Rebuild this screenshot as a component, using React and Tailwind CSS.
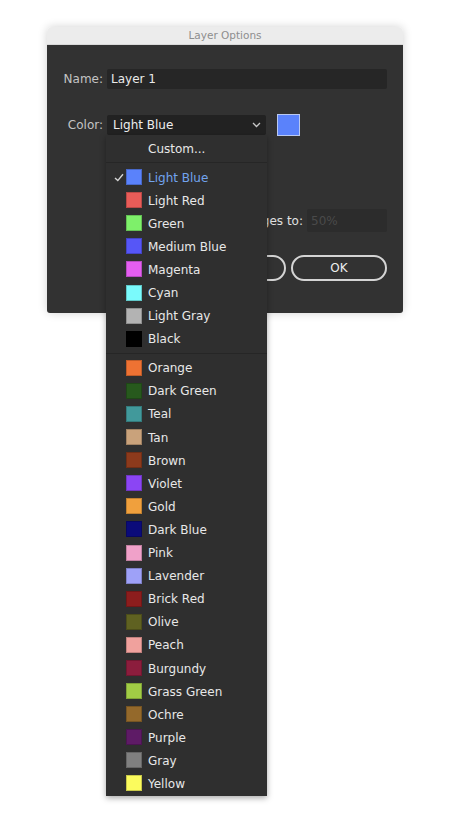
const COLORS_A = [
  { name: "Light Blue", hex: "#5a82fb", checked: true },
  { name: "Light Red", hex: "#e95c58" },
  { name: "Green", hex: "#7ef06a" },
  { name: "Medium Blue", hex: "#5656f7" },
  { name: "Magenta", hex: "#e45ef0" },
  { name: "Cyan", hex: "#7afafc" },
  { name: "Light Gray", hex: "#b3b3b3" },
  { name: "Black", hex: "#000000" },
];

const COLORS_B = [
  { name: "Orange", hex: "#ee7233" },
  { name: "Dark Green", hex: "#27591d" },
  { name: "Teal", hex: "#41999b" },
  { name: "Tan", hex: "#c9a27b" },
  { name: "Brown", hex: "#8c3a1c" },
  { name: "Violet", hex: "#8b45f4" },
  { name: "Gold", hex: "#f0a03d" },
  { name: "Dark Blue", hex: "#0b0b7a" },
  { name: "Pink", hex: "#f0a1c9" },
  { name: "Lavender", hex: "#9ea1f8" },
  { name: "Brick Red", hex: "#8c1d1d" },
  { name: "Olive", hex: "#5f6121" },
  { name: "Peach", hex: "#f0a19d" },
  { name: "Burgundy", hex: "#8c1d3d" },
  { name: "Grass Green", hex: "#a1cc45" },
  { name: "Ochre", hex: "#94692b" },
  { name: "Purple", hex: "#5e1b66" },
  { name: "Gray", hex: "#808080" },
  { name: "Yellow", hex: "#fbfb5d" },
];

function MenuRow({ item }) {
  return (
    <div className="flex items-center h-[23.1px]">
      <div className="w-[20px] flex justify-center pl-[5px]">
        {item.checked && (
          <svg width="10" height="9" viewBox="0 0 10 9" fill="none">
            <polyline points="1,5 3.8,7.6 9,1.2" stroke="#d6d6d6" strokeWidth="1.4" />
          </svg>
        )}
      </div>
      <span
        className="w-[16px] h-[16px] border border-black/20"
        style={{ backgroundColor: item.hex }}
      />
      <span
        className={
          "ml-[6px] text-[12px] leading-[16px] pt-[1px] " +
          (item.checked ? "text-[#72a4ee]" : "text-[#e8e8e8]")
        }
      >
        {item.name}
      </span>
    </div>
  );
}

function ColorMenu() {
  return (
    <div className="absolute left-[59px] top-[108px] w-[161px] bg-[#2f2f2f] pt-[1.5px] pb-[1px] shadow-[0_2px_6px_rgba(0,0,0,0.35)]">
      <div className="h-[23px] flex items-center pl-[42px] pt-[1px] text-[12px] text-[#e8e8e8]">
        Custom...
      </div>
      <div className="h-[6px] flex items-center">
        <div className="h-px w-full bg-[#262626]" />
      </div>
      {COLORS_A.map((c) => (
        <MenuRow key={c.name} item={c} />
      ))}
      <div className="h-[6px] flex items-center">
        <div className="h-px w-full bg-[#262626]" />
      </div>
      {COLORS_B.map((c) => (
        <MenuRow key={c.name} item={c} />
      ))}
    </div>
  );
}

export default function App() {
  return (
    <div className="min-h-[825px] w-full bg-white pt-[27px] pl-[47px] font-['DejaVu_Sans',sans-serif]">
      <div className="relative w-[356px] h-[286px] rounded-[5px] shadow-[0_0_10px_rgba(0,0,0,0.18)]">
        {/* title bar */}
        <div className="h-[18px] rounded-t-[5px] bg-[#ececec] border-b border-[#d9d9d9] flex items-center justify-center pt-[1px] text-[10.5px] text-[#8e8e8e]">
          Layer Options
        </div>

        {/* body */}
        <div className="h-[268px] bg-[#323232] rounded-b-[3px] pr-[16px] flex flex-col">
          <div className="mt-[24px] flex items-center h-[20px] gap-[4px]">
            <span className="w-[56px] text-right text-[12px] text-[#c4c4c4]">Name:</span>
            <div className="flex-1 h-[20px] bg-[#262626] rounded-[2px] flex items-center px-[4px] text-[12px] text-[#eaeaea]">
              Layer 1
            </div>
          </div>

          <div className="mt-[26px] flex items-center h-[20px] gap-[4px]">
            <span className="w-[56px] text-right text-[12px] text-[#c4c4c4]">Color:</span>
            <div className="w-[159px] h-[20px] bg-[#222222] rounded-[2px] flex items-center justify-between pl-[6px] pr-[5px] text-[12px] text-[#eeeeee]">
              Light Blue
              <svg width="9" height="6" viewBox="0 0 9 6" fill="none">
                <polyline points="1,1 4.5,4.5 8,1" stroke="#c8c8c8" strokeWidth="1.3" />
              </svg>
            </div>
            <span className="ml-[7px] w-[23px] h-[22px] bg-[#5a82fb] border border-[#b9c8f0]" />
          </div>

          <div className="mt-[74px] flex items-center justify-end h-[23px] gap-[4px]">
            <span className="text-[12px] text-[#e0e0e0] pt-[1px]">Dim Images to:</span>
            <div className="w-[80px] h-[23px] bg-[#2c2c2c] rounded-[2px] flex items-center px-[4px] text-[12px] text-[#4a4a4a]">
              50%
            </div>
          </div>

          <div className="mt-[23px] flex justify-end gap-[5px]">
            <button className="w-[96px] h-[26px] rounded-full border-2 border-[#d4d4d4] text-[12px] text-[#eeeeee]">
              Cancel
            </button>
            <button className="w-[96px] h-[26px] rounded-full border-2 border-[#d4d4d4] text-[12px] text-[#eeeeee]">
              OK
            </button>
          </div>
        </div>

        <ColorMenu />
      </div>
    </div>
  );
}
